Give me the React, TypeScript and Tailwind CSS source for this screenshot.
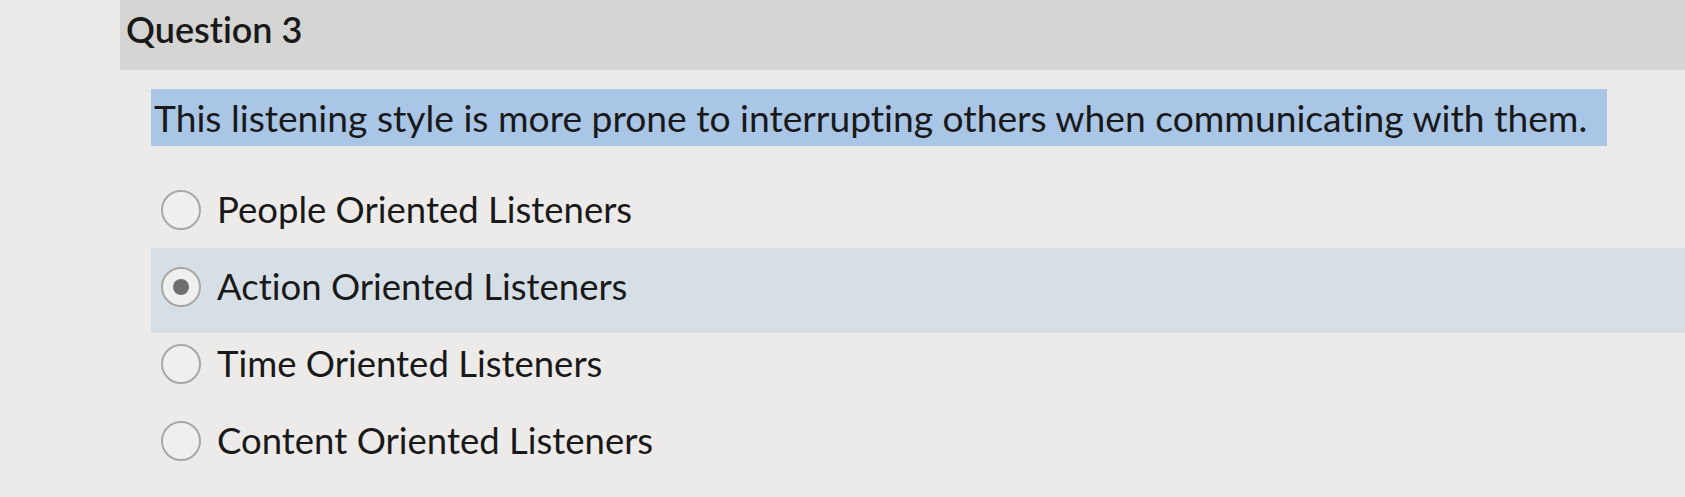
const options = [
  { id: "people", label: "People Oriented Listeners" },
  { id: "action", label: "Action Oriented Listeners" },
  { id: "time", label: "Time Oriented Listeners" },
  { id: "content", label: "Content Oriented Listeners" },
];

function Radio({ checked }: { checked: boolean }) {
  return (
    <span className="flex h-[40px] w-[40px] shrink-0 items-center justify-center rounded-full border-2 border-[#a8a8a6] bg-[#efefed]">
      {checked && <span className="h-[16px] w-[16px] rounded-full bg-[#6f6f6f]" />}
    </span>
  );
}

export default function App() {
  const selected = "action";

  return (
    <div className="h-[497px] overflow-hidden bg-[#ecebe9] font-['Lato','Open_Sans',sans-serif] text-[#191919] [font-variant-ligatures:none]">
      <div className="ml-[120px] h-[70px] bg-[#d5d5d3] pl-[6px] pt-[11px]">
        <h2 className="text-[36px] font-semibold leading-none">Question 3</h2>
      </div>

      <div className="pl-[151px] pt-[19px]">
        <p className="inline-block bg-[#a9c6e6] py-[8px] pl-[3px] pr-[20px] text-[37.2px] leading-[41px]">
          This listening style is more prone to interrupting others when communicating with them.
        </p>
      </div>

      <div className="ml-[151px] mt-[25px] flex flex-col">
        {options.map((opt) => {
          const isSelected = opt.id === selected;
          return (
            <label
              key={opt.id}
              className={`flex items-center gap-[16px] pl-[10px] ${
                isSelected ? "-mb-[8px] h-[85px] bg-[#d7dfe6] pb-[8px]" : "h-[77px]"
              }`}
            >
              <Radio checked={isSelected} />
              <span className="text-[36.5px] leading-none">{opt.label}</span>
            </label>
          );
        })}
      </div>
    </div>
  );
}
